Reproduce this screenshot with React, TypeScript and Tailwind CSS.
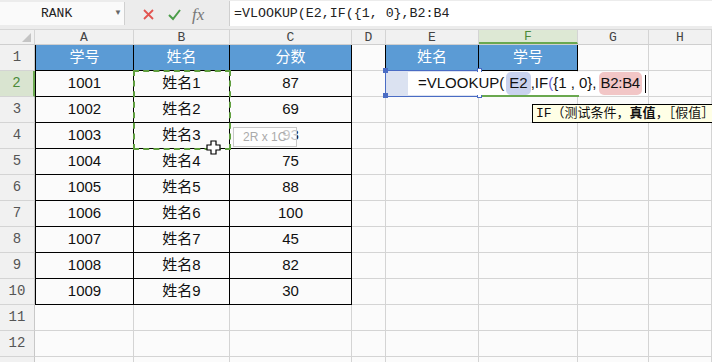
import React from "react";

const colW = ["w-[99px]", "w-[96px]", "w-[122px]", "w-[34px]", "w-[93px]", "w-[99px]", "w-[71px]", "w-[63px]"];
const letters = ["A", "B", "C", "D", "E", "F", "G", "H"];

const data: string[][] = [
  ["学号", "姓名", "分数"],
  ["1001", "姓名1", "87"],
  ["1002", "姓名2", "69"],
  ["1003", "姓名3", "93"],
  ["1004", "姓名4", "75"],
  ["1005", "姓名5", "88"],
  ["1006", "姓名6", "100"],
  ["1007", "姓名7", "45"],
  ["1008", "姓名8", "82"],
  ["1009", "姓名9", "30"],
];

const inTable = (r: number, c: number) =>
  (r >= 1 && r <= 10 && c >= 0 && c <= 2) || (r === 1 && (c === 4 || c === 5));

const isBlue = (r: number, c: number) => r === 1 && inTable(r, c);

function cellText(r: number, c: number) {
  if (r >= 1 && r <= 10 && c <= 2) return data[r - 1][c];
  if (r === 1 && c === 4) return "姓名";
  if (r === 1 && c === 5) return "学号";
  return "";
}

const Cell = ({ r, c }: { r: number; c: number }) => {
  const right = inTable(r, c) || inTable(r, c + 1);
  const bottom = inTable(r, c) || inTable(r + 1, c);
  const blue = isBlue(r, c);
  return (
    <div
      className={[
        colW[c],
        "h-full shrink-0 flex items-center justify-center text-[15px]",
        right ? "border-r border-r-black" : "border-r border-r-[#d4d4d4]",
        bottom ? "border-b border-b-black" : "border-b border-b-[#d4d4d4]",
        c === 0 && r >= 1 && r <= 10 ? "border-l border-l-black" : "",
        blue ? "bg-[#5b9bd5] text-white" : r === 2 && c === 4 ? "bg-[#dbe2f1] text-[#111]" : "bg-[#fbfbfb] text-[#111]",
      ].join(" ")}
    >
      {cellText(r, c)}
    </div>
  );
};

const Row = ({ r }: { r: number }) => (
  <div className="flex h-[26px]">
    <div
      className={[
        "w-[35px] shrink-0 flex items-center justify-center font-['Liberation_Mono',monospace] text-[14px] border-b border-b-[#d4d4d4]",
        r === 2 ? "bg-[#d9e4d0] text-[#4b8a3a] border-r-2 border-r-[#6aa84f]" : "bg-[#f1f1f1] text-[#555] border-r border-r-[#c8c8c8]",
      ].join(" ")}
    >
      {r <= 12 ? r : ""}
    </div>
    {letters.map((_, c) => (
      <Cell key={c} r={r} c={c} />
    ))}
  </div>
);

export default function App() {
  return (
    <div className="w-[712px] h-[362px] overflow-hidden bg-[#fbfbfb] font-['Liberation_Sans','Noto_Sans_CJK_SC',sans-serif]">
      {/* formula bar */}
      <div className="flex h-[30px] bg-[#ececec] border-b border-b-[#d6d6d6]">
        <div className="w-[125px] h-[23px] mt-[2px] bg-[#fafafa] border-r border-r-[#d0d0d0] flex items-center relative">
          <span className="ml-[41px] font-['Liberation_Mono',monospace] text-[13px] text-[#222]">RANK</span>
          <span className="absolute left-[114px] top-[5px] text-[8px] text-[#666]">▼</span>
        </div>
        <div className="w-[104px] flex items-center">
          <svg className="ml-[18px]" width="11" height="11" viewBox="0 0 11 11">
            <path d="M1 1L10 10M10 1L1 10" stroke="#e25450" strokeWidth="1.8" />
          </svg>
          <svg className="ml-[14px]" width="13" height="12" viewBox="0 0 13 12">
            <path d="M1 6L5 10L12 1" stroke="#4a9d48" strokeWidth="2" fill="none" />
          </svg>
          <span className="ml-[11px] font-['Liberation_Serif',serif] italic text-[17px] text-[#777]">fx</span>
        </div>
        <div className="flex-1 h-[25px] mt-[1px] bg-white border-l border-l-[#cfcfcf] flex items-center">
          <span className="ml-[4px] font-['Liberation_Mono',monospace] text-[13.3px] text-[#222] whitespace-pre">
            =VLOOKUP(E2,IF({"{"}1, 0{"}"},B2:B4
          </span>
        </div>
      </div>

      {/* sheet */}
      <div className="relative">
        <div className="flex h-[15px] bg-[#f1f1f1] border-b border-b-[#cfcfcf] font-['Liberation_Mono',monospace] text-[13px]">
          <div className="w-[35px] shrink-0 relative border-r border-r-[#d4d4d4]">
            <svg className="absolute right-[3px] bottom-[2px]" width="9" height="9" viewBox="0 0 9 9">
              <path d="M9 0L9 9L0 9Z" fill="#c4c4c4" />
            </svg>
          </div>
          {letters.map((l, c) => (
            <div
              key={l}
              className={[
                colW[c],
                "shrink-0 flex items-center justify-center leading-none",
                c === 5 ? "bg-[#dde8d4] text-[#4b8a3a] border-b-2 border-b-[#6aa84f]" : "text-[#444]",
                "border-r border-r-[#d4d4d4]",
              ].join(" ")}
            >
              {l}
            </div>
          ))}
        </div>
        {Array.from({ length: 13 }, (_, i) => (
          <Row key={i} r={i + 1} />
        ))}

        {/* copy marquee B2:B4 */}
        <div className="absolute left-[133px] top-[40px] w-[98px] h-[80px] border-2 border-dashed border-[#5f9e3e]" />

        {/* 2R x 1C hint */}
        <div className="absolute left-[233px] top-[97px] w-[64px] h-[20px] bg-white/75 border border-[#c8c8c8] text-[12px] text-[#aaa] flex items-center pl-[9px]">
          2R x 1C
        </div>

        {/* move cursor */}
        <svg className="absolute left-[206px] top-[110px]" width="15" height="15" viewBox="0 0 15 15">
          <path d="M5 1H10V5H14V10H10V14H5V10H1V5H5Z" fill="white" stroke="black" strokeWidth="1.2" />
        </svg>

        {/* edit box E2 */}
        <div className="absolute left-[385px] top-[40px] w-[95px] h-[27px] border-[1.5px] border-[#4a6cc4]" />
        <div className="absolute left-[383px] top-[38px] w-[5px] h-[5px] bg-[#4a6cc4]" />
        <div className="absolute left-[477px] top-[38px] w-[5px] h-[5px] bg-white border border-[#4a6cc4]" />
        <div className="absolute left-[383px] top-[63px] w-[5px] h-[5px] bg-[#4a6cc4]" />
        <div className="absolute left-[477px] top-[63px] w-[5px] h-[5px] bg-white border border-[#4a6cc4]" />
        <div className="absolute left-[482px] top-[65px] w-[97px] h-[2px] bg-[#6aa84f]" />

        <div className="absolute left-[408px] top-[42px] w-[240px] h-[23px] bg-white flex items-center text-[15px] text-[#111] whitespace-pre">
          <span className="ml-[10px]">=VLOOKUP(</span>
          <span className="ml-[2px] px-[3px] rounded-[5px] bg-[#c9d2ee]">E2</span>
          <span>,IF</span>
          <span className="text-[#6a5fd0]">(</span>
          <span>{"{"}1 , 0{"}"},</span>
          <span className="ml-[2px] px-[2px] rounded-[5px] bg-[#f2c6c6] tracking-[-0.3px]">B2:B4</span>
          <span className="ml-[3px] w-px h-[18px] bg-black" />
        </div>

        {/* function tooltip */}
        <div className="absolute left-[532px] top-[74px] h-[19px] pr-[20px] bg-[#ffffe6] border border-black flex items-center whitespace-pre text-[13px] text-[#111] font-['Liberation_Mono','Noto_Sans_CJK_SC',monospace]">
          <span className="ml-[3px]">IF（测试条件，</span>
          <span className="font-bold">真值</span>
          <span>，［假值］</span>
        </div>
      </div>
    </div>
  );
}
